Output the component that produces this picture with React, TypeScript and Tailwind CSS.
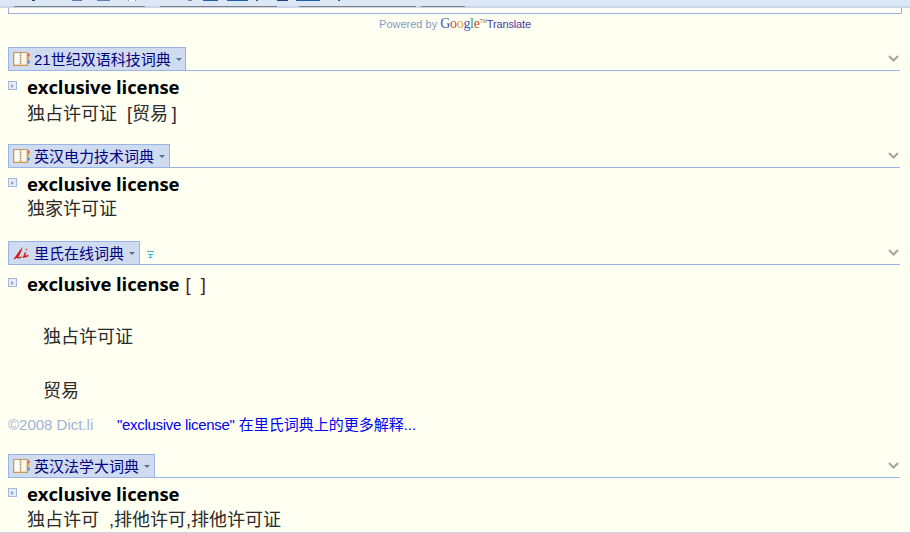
import type { ReactNode } from "react"

const CJK = "font-['Liberation_Sans','Noto_Sans_CJK_SC',sans-serif]"

function BookIcon() {
  return (
    <svg width="17" height="14" viewBox="0 0 17 14" className="shrink-0">
      <rect x="0.5" y="0.5" width="14" height="13" fill="#e2b878" stroke="#c89a58" />
      <rect x="1.5" y="1" width="5.5" height="11.5" fill="#ffffff" />
      <rect x="8" y="1" width="5.5" height="11.5" fill="#faf6ee" />
      <path d="M7.5 1v12" stroke="#a0a0a0" strokeWidth="1.8" strokeDasharray="1 1" />
      <rect x="15" y="1.5" width="1.6" height="3" fill="#e0563a" />
      <rect x="15" y="5" width="1.6" height="2.5" fill="#e8c040" />
      <rect x="15" y="8.5" width="1.6" height="3" fill="#4f82d0" />
    </svg>
  )
}

function LiIcon() {
  return (
    <svg width="17" height="14" viewBox="0 0 17 14" className="shrink-0">
      <path d="M0.5 13 C3 10 6 5 9.5 1 C9 5 7 8 5.5 11 C7 11 9 10.5 10 9.5 C9 12 6 13 4 12 C3 12.5 1.5 13.5 0.5 13Z" fill="#cc1f1a" />
      <path d="M12.5 6.5 L11 11 L15.5 9.5" fill="none" stroke="#cc1f1a" strokeWidth="1.6" />
      <circle cx="13.5" cy="3.5" r="1" fill="#e06a60" />
    </svg>
  )
}

function Chevron() {
  return (
    <svg width="11" height="7" viewBox="0 0 11 7" className="shrink-0">
      <path d="M1 1l4.5 4.5L10 1" fill="none" stroke="#a3a3a3" strokeWidth="2" />
    </svg>
  )
}

function DictHeader({ title, icon, extra, width }: { title: string; icon: ReactNode; extra?: ReactNode; width: string }) {
  return (
    <div className="flex h-[24px] shrink-0 items-stretch border-b border-[#9ab4e6]">
      <div className={`flex h-[24px] shrink-0 items-center border border-[#9ab4e6] bg-[#cfdcf0] pl-[4px] ${width}`}>
        {icon}
        <span className="ml-[4px] text-[15px] leading-none text-[#00007f]">{title}</span>
        <span className="ml-[5px] h-0 w-0 border-x-[3px] border-t-[3px] border-x-transparent border-t-[#5f6f8f]" />
      </div>
      {extra}
      <div className="ml-auto flex items-center pr-[1px]">
        <Chevron />
      </div>
    </div>
  )
}

function Headword({ children }: { children?: ReactNode }) {
  return (
    <div className="flex items-start">
      <span className="mt-[6px] flex h-[9px] w-[9px] items-center justify-center border border-[#a5b8dc] bg-[#e6ecf8]">
        <span className="h-0 w-0 border-y-[2px] border-l-[3px] border-y-transparent border-l-[#8fa3cc]" />
      </span>
      <div className="ml-[10px] text-[18.5px] leading-[24px] text-black">
        <span className="font-['Open_Sans',sans-serif] font-bold tracking-[-0.1px]">exclusive license</span>
        {children}
      </div>
    </div>
  )
}

// bits of the toolbar that is scrolled away above the frame
function ToolbarScraps() {
  return (
    <div className="flex h-[1px] items-start">
      <div className="ml-[32px] h-[1px] w-[3px] bg-[#2a3f78]" />
      <div className="ml-[37px] h-[1px] w-[10px] bg-[#5a7fb4]" />
      <div className="ml-[15px] h-[1px] w-[13px] bg-[#5a7fb4]" />
      <div className="ml-[18px] h-[1px] w-[8px] border-x border-[#8c9ab4] bg-white" />
      <div className="ml-[52px] h-[1px] w-[4px] bg-[#6f86b0]" />
      <div className="ml-[11px] h-[1px] w-[15px] bg-[#1f5fae]" />
      <div className="ml-[9px] h-[1px] w-[21px] bg-[#1f5fae]" />
      <div className="ml-[8px] h-[1px] w-[2px] bg-[#1f5fae]" />
      <div className="ml-[19px] h-[1px] w-[11px] bg-[#1f3f86]" />
      <div className="ml-[8px] h-[1px] w-[24px] bg-[#1f5fae]" />
      <div className="ml-[18px] h-[1px] w-[2px] bg-[#1f5fae]" />
    </div>
  )
}

export default function App() {
  return (
    <div className={`flex h-[533px] w-[910px] flex-col overflow-hidden bg-[#fffff2] ${CJK}`}>
      <div className="h-[6px] shrink-0 bg-[#dce7f5]">
        <ToolbarScraps />
      </div>
      <div className="flex h-[2px] shrink-0 bg-[#c8d6ea]">
        <div className="ml-[14px] h-[1px] w-[131px] bg-[#808080]" />
        <div className="ml-[15px] h-[1px] w-[117px] bg-[#808080]" />
        <div className="ml-[22px] h-[1px] w-[117px] bg-[#808080]" />
        <div className="ml-[5px] h-[1px] w-[44px] bg-[#808080]" />
      </div>
      <div className="mx-[8px] h-[6px] shrink-0 border-x border-b border-[#9db0dc] bg-[#fffff8]" />

      <div className="mt-[3px] flex h-[14px] shrink-0 items-center justify-center font-['Liberation_Sans',sans-serif] text-[11px] leading-none">
        <span className="text-[#7f9cc8]">Powered by</span>
        <span className="ml-[3px] font-['Liberation_Serif',serif] text-[14px] tracking-[-0.3px]">
          <span className="text-[#3b5fb8]">G</span>
          <span className="text-[#c8493a]">o</span>
          <span className="text-[#d8a830]">o</span>
          <span className="text-[#3b5fb8]">g</span>
          <span className="text-[#4f9a4f]">l</span>
          <span className="text-[#c8493a]">e</span>
        </span>
        <span className="mb-[5px] text-[5px] text-[#777777]">TM</span>
        <span className="tracking-[-0.15px] text-[#3d3dab]">Translate</span>
      </div>

      <div className="mt-[16px] shrink-0 px-[8px] pr-[10px]">
        <DictHeader title="21世纪双语科技词典" icon={<BookIcon />} width="w-[178px]" />
        <div className="mt-[4px]">
          <Headword />
          <div className="ml-[19px] mt-[2px] whitespace-pre text-[18px] leading-[25px] text-[#2a2a2a]">独占许可证  [贸易{"\u2009"}]</div>
        </div>
      </div>

      <div className="mt-[17px] shrink-0 px-[8px] pr-[10px]">
        <DictHeader title="英汉电力技术词典" icon={<BookIcon />} width="w-[162px]" />
        <div className="mt-[4px]">
          <Headword />
          <div className="ml-[19px] text-[18px] leading-[24px] text-[#2a2a2a]">独家许可证</div>
        </div>
      </div>

      <div className="mt-[20px] shrink-0 px-[8px] pr-[10px]">
        <DictHeader
          title="里氏在线词典"
          icon={<LiIcon />}
          width="w-[132px]"
          extra={
            <svg width="7" height="7" viewBox="0 0 7 7" className="ml-[7px] mt-[10px] shrink-0">
              <path d="M0 .5h7M1 3.5h5M3.5 3.5v3M1.5 6.5h4" fill="none" stroke="#44b6dc" />
            </svg>
          }
        />
        <div className="mt-[7px]">
          <Headword>
            <span className="ml-[6px] font-['Liberation_Sans',sans-serif] font-normal text-[#5a1a10]">[&nbsp;&nbsp;]</span>
          </Headword>
          <div className="ml-[35px] mt-[28px] text-[18px] leading-[24px] text-[#2a2a2a]">独占许可证</div>
          <div className="ml-[35px] mt-[30px] text-[18px] leading-[24px] text-[#2a2a2a]">贸易</div>
        </div>
        <div className="mt-[11px] flex h-[20px] items-center text-[15px] leading-none">
          <span className="w-[109px] text-[#9db4da]">©2008 Dict.li</span>
          <span className="text-[#0000ee]">
            <span className="tracking-[-0.3px]">"exclusive license"</span> 在里氏词典上的更多解释...
          </span>
        </div>
      </div>

      <div className="mt-[20px] shrink-0 px-[8px] pr-[10px]">
        <DictHeader title="英汉法学大词典" icon={<BookIcon />} width="w-[147px]" />
        <div className="mt-[4px]">
          <Headword />
          <div className="ml-[19px] mt-[1px] whitespace-pre text-[18px] leading-[24px] text-[#2a2a2a]">独占许可  ,排他许可,排他许可证</div>
        </div>
      </div>

      <div className="mt-auto h-[2px] shrink-0 bg-[#c8d6ea]" />
    </div>
  )
}
